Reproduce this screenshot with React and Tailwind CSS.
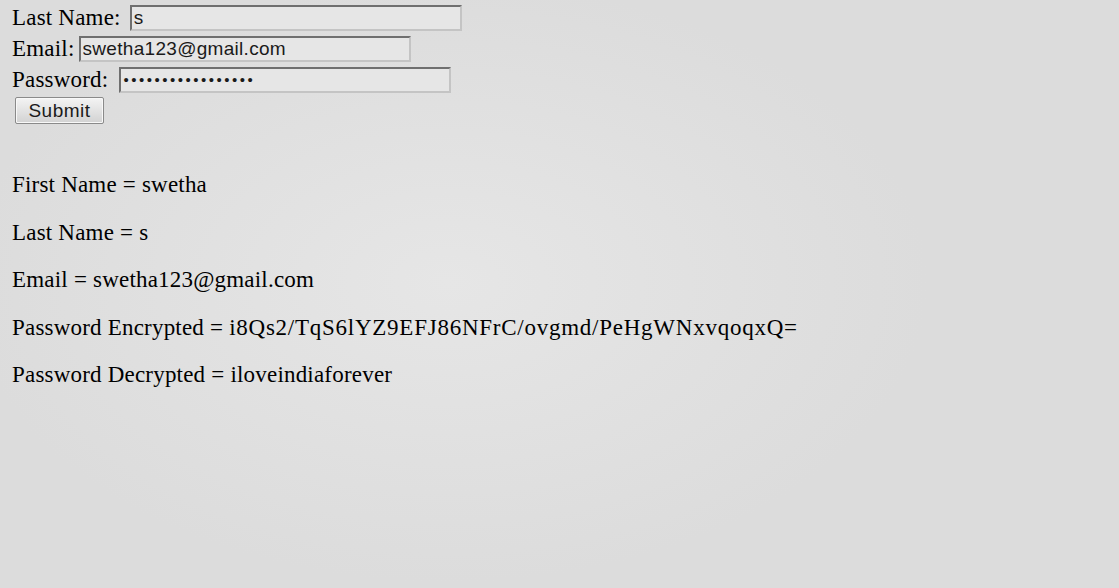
export default function App() {
  const results = [
    ['First Name', 'swetha', ''],
    ['Last Name', 's', ''],
    ['Email', 'swetha123@gmail.com', ''],
    ['Password Encrypted', 'i8Qs2/TqS6lYZ9EFJ86NFrC/ovgmd/PeHgWNxvqoqxQ=', 'tracking-[0.75px]'],
    ['Password Decrypted', 'iloveindiaforever', ''],
  ];

  const fields = [
    { label: 'Last Name:', value: 's', type: 'text', gap: 'ml-[9px]', extra: 'text-[19px] tracking-[0.3px]' },
    { label: 'Email:', value: 'swetha123@gmail.com', type: 'text', gap: 'ml-[4px]', extra: 'text-[19px] tracking-[0.3px]' },
    { label: 'Password:', value: 'iloveindiaforever', type: 'password', gap: 'ml-[11px]', extra: 'text-[15px] tracking-[2.5px]' },
  ];

  return (
    <div
      className="min-h-[588px] w-full bg-[#dcdcdc] bg-[radial-gradient(ellipse_480px_300px_at_40%_48%,#e6e6e6,#dcdcdc)] pl-[12px] pt-[5px] text-black tracking-[0.2px]"
      style={{ fontFamily: '"Liberation Serif", "Times New Roman", serif' }}
    >
      {/* Form */}
      <div className="flex flex-col gap-[6px]">
        {fields.map((f) => (
          <div key={f.label} className="flex h-[25px] items-center text-[23px] leading-[25px]">
            <span>{f.label}</span>
            <input
              readOnly
              type={f.type}
              value={f.value}
              className={`${f.gap} h-[26px] w-[332px] border-2 border-t-[#6f6f6f] border-l-[#6f6f6f] border-r-[#c4c4c4] border-b-[#c4c4c4] bg-[#e6e6e6] px-[2px] text-[#1a1a1a] outline-none ${f.extra}`}
              style={{ fontFamily: '"Liberation Sans", Arial, sans-serif' }}
            />
          </div>
        ))}
      </div>
      <button
        type="button"
        className="mt-[5px] ml-[3px] h-[27px] w-[89px] rounded-[2px] border border-[#8a8a8a] bg-gradient-to-b from-[#f4f4f4] to-[#d2d2d2] text-[19px] leading-[25px] tracking-[0.5px] text-[#1a1a1a] shadow-[inset_0_0_0_1px_#f8f8f8]"
        style={{ fontFamily: '"Liberation Sans", Arial, sans-serif' }}
      >
        Submit
      </button>

      {/* Results */}
      <div className="mt-[49px] flex flex-col gap-[23.5px] text-[23px] leading-[24px]">
        {results.map(([k, v, cls]) => (
          <p key={k}>
            {k} = <span className={cls}>{v}</span>
          </p>
        ))}
      </div>
    </div>
  );
}
